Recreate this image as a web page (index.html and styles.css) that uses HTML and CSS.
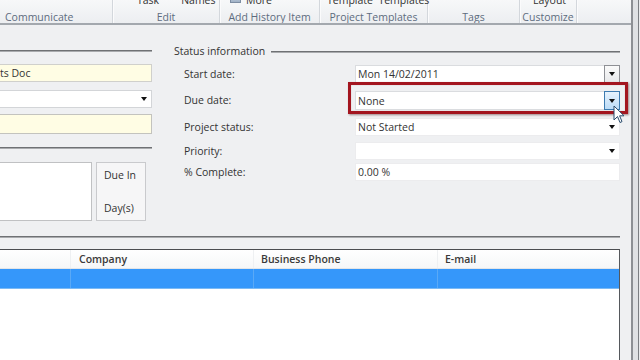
FILE: index.html
```html
<!DOCTYPE html>
<html lang="en">
<head>
  <meta charset="UTF-8" />
  <title>Project - Task Details</title>
  <link rel="stylesheet" href="styles.css">
</head>
<body>
  <div class="window">
    <div class="frame">
      <div class="ribbon">
        <div class="group g-comm">
          <div class="top-row"></div>
          <div class="label">Communicate</div>
        </div>
        <div class="group g-edit">
          <div class="top-row"><span>Task</span><span>Names</span></div>
          <div class="label">Edit</div>
        </div>
        <div class="group g-hist">
          <div class="top-row"><span class="mini-icon"></span><span>More</span></div>
          <div class="label">Add History Item</div>
        </div>
        <div class="group g-tmpl">
          <div class="top-row"><span>Template&nbsp; Templates</span></div>
          <div class="label">Project Templates</div>
        </div>
        <div class="group g-tags">
          <div class="top-row"></div>
          <div class="label">Tags</div>
        </div>
        <div class="group g-cust">
          <div class="top-row"><span>Layout</span></div>
          <div class="label">Customize</div>
        </div>
        <div class="group g-rest"></div>
      </div>

      <div class="content">
        <div class="upper">
          <div class="left-col">
            <div class="rule"></div>
            <div class="field yellow first">ts Doc</div>
            <div class="field select">
              <span></span><span class="arrow"></span>
            </div>
            <div class="field yellow tall"></div>
            <div class="rule second"></div>
            <div class="boxes">
              <div class="box-text"></div>
              <div class="box-due">
                <span>Due In</span>
                <span>Day(s)</span>
              </div>
            </div>
          </div>

          <div class="right-col">
            <div class="section-head">
              <span>Status information</span>
              <div class="head-line"></div>
            </div>
            <div class="fields">
              <div class="lbl">Start date:</div>
              <div class="field date">
                <span>Mon 14/02/2011</span>
                <span class="drop-btn"><span class="arrow"></span></span>
              </div>

              <div class="lbl">Due date:</div>
              <div class="field date due">
                <span>None</span>
                <span class="drop-btn hot"><span class="arrow"></span></span>
                <div class="highlight"></div>
                <svg class="cursor" width="12" height="19" viewBox="0 0 12 19">
                  <path d="M1 1 L1 15 L4.5 11.5 L7 17.5 L9 16.6 L6.6 10.8 L11 10.8 Z" fill="#fff" stroke="#2b4d6e" stroke-width="1" stroke-linejoin="round"/>
                </svg>
              </div>

              <div class="lbl">Project status:</div>
              <div class="field plain">
                <span>Not Started</span><span class="arrow"></span>
              </div>

              <div class="lbl">Priority:</div>
              <div class="field plain">
                <span></span><span class="arrow"></span>
              </div>

              <div class="lbl">% Complete:</div>
              <div class="field plain">
                <span>0.00 %</span>
              </div>
            </div>
          </div>
        </div>

        <div class="rule wide"></div>

        <div class="grid">
          <div class="grid-head">
            <div class="col c1"></div>
            <div class="col c2">Company</div>
            <div class="col c3">Business Phone</div>
            <div class="col c4">E-mail</div>
          </div>
          <div class="grid-row selected">
            <div class="col c1"></div>
            <div class="col c2"></div>
            <div class="col c3"></div>
            <div class="col c4"></div>
          </div>
          <div class="grid-body"></div>
        </div>
      </div>
    </div>
    <div class="edge"></div>
  </div>
</body>
</html>
```

FILE: styles.css
```css
:root {
  --bg: #eff0f2;
  --text: #333333;
  --label-blue: #5d6c7e;
  --field-border: #d3d5d8;
  --yellow: #fffde4;
  --select-blue: #3597fa;
}
* { box-sizing: border-box; }
body {
  margin: 0;
  width: 640px;
  height: 360px;
  overflow: hidden;
  background: #e9eaec;
  font-family: 'Open Sans', 'Noto Sans', sans-serif;
  font-size: 10.5px;
  color: var(--text);
}
.window {
  display: flex;
  height: 360px;
}
.frame {
  width: 632px;
  height: 360px;
  display: flex;
  flex-direction: column;
  background: var(--bg);
}
.edge {
  width: 8px;
  border-left: 2px solid #8c8f94;
  border-right: 1px solid #7b7e83;
  background: #dfe1e4;
  margin-right: 1px;
}

/* ribbon */
.ribbon {
  height: 25px;
  display: flex;
  overflow: hidden;
  background: linear-gradient(#f7f8f9, #eceef1);
  border-bottom: 2px solid #a3a8ae;
  flex-shrink: 0;
}
.group {
  display: flex;
  flex-direction: column;
  justify-content: flex-end;
  border-right: 1px solid #d3d7dc;
  box-shadow: 1px 0 0 #fbfbfc;
  padding-bottom: 0;
}
.group .top-row {
  height: 12px;
  line-height: 12px;
  margin-bottom: 5px;
  display: flex;
  align-items: center;
  color: #333;
  white-space: nowrap;
}
.group .label {
  height: 12px;
  line-height: 12px;
  text-align: center;
  color: var(--label-blue);
  white-space: nowrap;
}
.g-comm { width: 113px; }
.g-comm .label { text-align: left; padding-left: 5px; }
.g-edit { width: 107px; }
.g-edit .top-row { padding-left: 24px; gap: 22px; }
.g-hist { width: 100px; }
.g-hist .top-row { padding-left: 10px; gap: 5px; }
.mini-icon {
  width: 11px;
  height: 11px;
  margin-top: -6px;
  background: linear-gradient(#dfe6ef, #9fb1c6);
  border: 1px solid #7d8ea3;
}
.g-tmpl { width: 108px; }
.g-tmpl .top-row { padding-left: 7px; }
.g-tags { width: 92px; }
.g-cust { width: 57px; }
.g-cust .top-row { padding-left: 13px; }
.g-rest { flex: 1; border-right: none; box-shadow: none; }

/* form */
.content {
  flex: 1;
  display: flex;
  flex-direction: column;
  padding-right: 11px;
}
.upper {
  display: flex;
}
.left-col {
  width: 152px;
  display: flex;
  flex-direction: column;
}
.rule {
  height: 2px;
  border-top: 1px solid #6f7174;
  border-bottom: 1px solid #a9abae;
  margin-top: 25px;
}
.rule.second { margin-top: 13px; }
.rule.wide { margin-top: 15px; }

.field {
  height: 18px;
  line-height: 16px;
  border: 1px solid var(--field-border);
  background: #fff;
  display: flex;
  align-items: center;
  justify-content: space-between;
  white-space: nowrap;
}
.field.yellow {
  background: var(--yellow);
  border-color: #d0d0cc;
}
.left-col .field { border-left: none; }
.field.first { margin-top: 12px; padding-left: 0; }
.field.select { margin-top: 8px; padding-right: 4px; }
.field.tall { margin-top: 6px; height: 20px; border-color: #c3c3be; }

.arrow {
  width: 0;
  height: 0;
  border-left: 3.5px solid transparent;
  border-right: 3.5px solid transparent;
  border-top: 4px solid #111;
}

.boxes {
  display: flex;
  gap: 4px;
  margin-top: 13px;
  height: 59px;
}
.box-text {
  width: 92px;
  background: #fff;
  border: 1px solid #c0c1c3;
  border-left: none;
}
.box-due {
  width: 50px;
  background: #f6f6f7;
  border: 1px solid #c9cacd;
  display: flex;
  flex-direction: column;
  justify-content: space-between;
  padding: 5px 0 5px 7px;
  line-height: 14px;
}

.right-col {
  margin-left: 22px;
  width: 446px;
  display: flex;
  flex-direction: column;
}
.section-head {
  margin-top: 19px;
  height: 14px;
  display: flex;
  align-items: center;
  gap: 6px;
  white-space: nowrap;
}
.head-line {
  flex: 1;
  height: 2px;
  margin-top: 2px;
  border-top: 1px solid #6f7174;
  border-bottom: 1px solid #a9abae;
}
.fields {
  margin-top: 7px;
  display: grid;
  grid-template-columns: 181px 265px;
  grid-template-rows: 26px 27px 24px 21px 19px;
}
.lbl {
  padding-left: 10px;
  height: 18px;
  line-height: 18px;
}
.fields .field { padding-left: 2px; }
.field.date { padding-right: 0; border-color: #dadcdf; }
.field.due { height: 19px; position: relative; }
.field.plain { border-color: #ececee; padding-right: 4px; }
.drop-btn {
  width: 16px;
  height: 18px;
  margin: -1px -1px -1px 0;
  border: 1px solid #8e9095;
  background: linear-gradient(#fafafa, #e8e9eb);
  display: flex;
  align-items: center;
  justify-content: center;
}
.drop-btn.hot {
  height: 19px;
  border-color: #3d7bb0;
  background: linear-gradient(#e6f2fd, #bcdcf7);
}

.highlight {
  position: absolute;
  left: -8px;
  top: -10px;
  right: -9px;
  bottom: -5px;
  border: 3px solid #a3151f;
  box-shadow: 1px 1px 2px rgba(60, 0, 0, 0.45), inset 0 0 1px rgba(80, 0, 0, 0.4);
  pointer-events: none;
}
.cursor {
  position: absolute;
  right: -6px;
  top: 13px;
}

/* grid */
.grid {
  margin-top: 11px;
  flex: 1;
  display: flex;
  flex-direction: column;
  border-top: 1px solid #4a4c50;
  border-right: 1px solid #55585c;
  background: #fff;
}
.grid-head, .grid-row {
  display: flex;
}
.grid-head {
  height: 19px;
  line-height: 18px;
  background: linear-gradient(#ffffff, #f6f7f8);
  border-bottom: 1px solid #e3e5e8;
  font-weight: 600;
  color: #3a3a3a;
}
.col { border-right: 1px solid #eef0f2; padding-left: 8px; }
.c1 { width: 71px; }
.c2 { width: 183px; }
.c3 { width: 184px; padding-left: 7px; }
.c4 { flex: 1; border-right: none; padding-left: 7px; }
.grid-row.selected {
  height: 20px;
  background: var(--select-blue);
  border-bottom: 1px solid #7bbaf5;
}
.grid-row.selected .col { border-right-color: #5aa9f6; }
.grid-row.selected .c4 { border-right: none; }
.grid-body { flex: 1; }
```
